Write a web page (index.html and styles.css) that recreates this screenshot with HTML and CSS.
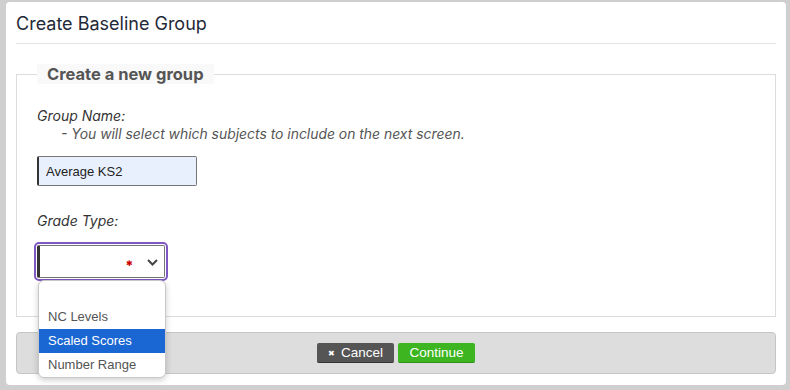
FILE: index.html
```html
<!DOCTYPE html>
<html lang="en">
<head>
    <meta charset="UTF-8">
    <title>Create Baseline Group</title>
    <link rel="stylesheet" href="styles.css">
</head>
<body>
    <div class="dialog">
        <h1 class="dialog-title">Create Baseline Group</h1>

        <fieldset class="group-box">
            <legend>Create a new group</legend>

            <div class="field-label name-label">Group Name:</div>
            <div class="field-hint">- You will select which subjects to include on the next screen.</div>
            <input type="text" class="name-input" value="Average KS2">

            <div class="field-label grade-label">Grade Type:</div>
            <div class="select-wrap">
                <div class="grade-select">
                    <span class="required">&#x2731;</span>
                    <svg class="chevron" width="11" height="7" viewBox="0 0 11 7">
                        <path d="M1 1 L5.5 5.5 L10 1" fill="none" stroke="#444" stroke-width="2"/>
                    </svg>
                </div>
                <ul class="grade-options">
                    <li class="blank"></li>
                    <li>NC Levels</li>
                    <li class="active">Scaled Scores</li>
                    <li>Number Range</li>
                </ul>
            </div>
        </fieldset>

        <div class="dialog-footer">
            <button class="btn btn-cancel"><span class="x">&#x2716;</span>Cancel</button>
            <button class="btn btn-continue">Continue</button>
        </div>
    </div>
</body>
</html>
```

FILE: styles.css
```css
body {
    margin: 0;
    background: #cfcfcf;
    font-family: Inter, "Liberation Sans", sans-serif;
    color: #333;
}

.dialog {
    margin: 2px 0 0 6px;
    width: 780px;
    height: 383px;
    box-sizing: border-box;
    padding: 0 10px;
    background: #fff;
    border-radius: 4px;
}

.dialog-title {
    margin: 0;
    padding: 11px 0 8px;
    font-size: 18px;
    line-height: 22px;
    font-weight: 400;
    color: #1f2937;
    border-bottom: 1px solid #e4e4e4;
}

.group-box {
    margin: 20px 0 0;
    padding: 0 20px;
    height: 253px;
    box-sizing: border-box;
    border: 1px solid #dcdcdc;
}

.group-box legend {
    padding: 0 10px;
    margin-left: 0;
    background: #f9f9f9;
    font-size: 16.5px;
    line-height: 20px;
    font-weight: 700;
    color: #555;
}

.field-label {
    font-size: 14px;
    line-height: 18px;
    font-style: italic;
    color: #333;
}

.name-label {
    margin-top: 23px;
}

.field-hint {
    padding-left: 24px;
    font-size: 13.9px;
    line-height: 18px;
    font-style: italic;
    color: #555;
}

.name-input {
    display: block;
    margin-top: 13px;
    width: 160px;
    height: 30px;
    box-sizing: border-box;
    padding: 0 7px;
    border: 1px solid #767676;
    border-left: 2px solid #333;
    border-radius: 2px;
    background: #e8f0fe;
    font-family: "Liberation Sans", Arial, sans-serif;
    font-size: 13px;
    color: #222;
}

.grade-label {
    margin-top: 26px;
}

.select-wrap {
    position: relative;
    margin-top: 15px;
    width: 128px;
}

.grade-select {
    display: flex;
    align-items: center;
    justify-content: flex-end;
    gap: 14px;
    height: 33px;
    box-sizing: border-box;
    padding-right: 6px;
    border: 1px solid #767676;
    border-left: 3px solid #333;
    border-radius: 2px;
    outline: 2px solid #7e57c2;
    outline-offset: 1px;
    background: #fff;
}

.required {
    color: #c00;
    font-size: 8px;
    margin-top: 2px;
}

.chevron {
    margin-top: 1px;
}

.grade-options {
    position: absolute;
    top: 35px;
    left: 1px;
    width: 126px;
    margin: 0;
    padding: 0;
    list-style: none;
    background: #fff;
    border: 1px solid #c8c8c8;
    border-radius: 6px;
    box-shadow: 0 2px 6px rgba(0, 0, 0, 0.2);
    overflow: hidden;
    font-family: "Liberation Sans", Arial, sans-serif;
    font-size: 13px;
    color: #555;
}

.grade-options li {
    height: 24px;
    line-height: 24px;
    padding-left: 9px;
}

.grade-options .active {
    background: #1a66d2;
    color: #fff;
}

.dialog-footer {
    display: flex;
    justify-content: center;
    gap: 4px;
    margin-top: 15px;
    padding: 10px 0;
    height: 42px;
    box-sizing: border-box;
    background: #dddddd;
    border: 1px solid #c6c6c6;
    border-radius: 4px;
}

.btn {
    width: 77px;
    height: 20px;
    padding: 0;
    border: none;
    border-radius: 2px;
    font-family: "Liberation Sans", Arial, sans-serif;
    font-size: 13.5px;
    color: #fff;
    cursor: pointer;
}

.btn-cancel {
    background: #555;
    border-bottom: 1px solid #333;
}

.btn-cancel .x {
    font-size: 8px;
    margin-right: 6px;
    vertical-align: 1px;
}

.btn-continue {
    background: #3cb521;
    border-bottom: 1px solid #2e8f19;
}
```
